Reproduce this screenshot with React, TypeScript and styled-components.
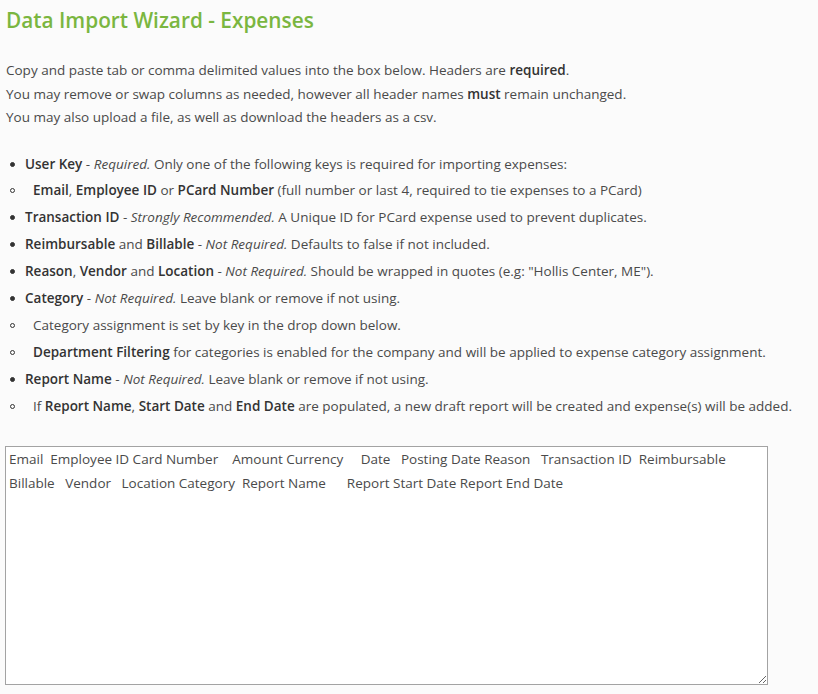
import styled, { createGlobalStyle } from "styled-components";

const GlobalStyle = createGlobalStyle`
  html, body {
    margin: 0;
    padding: 0;
    background: #fbfbfb;
  }
  body {
    font-family: "Open Sans", "Liberation Sans", sans-serif;
    color: #4a4a4a;
  }
`;

const Page = styled.div`
  padding: 8px 5px 0 5px;
`;

const Title = styled.h1`
  margin: 0 0 0 1px;
  font-size: 20.8px;
  line-height: 24px;
  font-weight: 600;
  color: #7ab640;
`;

const Intro = styled.p`
  margin: 27px 0 0 1px;
  font-size: 13.5px;
  line-height: 23.5px;
`;

const Strong = styled.b`
  font-weight: 600;
  color: #333;
`;

const List = styled.ul`
  list-style: none;
  margin: 21px 0 0 0;
  padding: 0;
  white-space: nowrap;
`;

const Item = styled.li<{ $sub?: boolean }>`
  position: relative;
  font-size: 13.5px;
  line-height: 26.9px;
  padding-left: ${(p) => (p.$sub ? "28px" : "20px")};

  &::before {
    content: "";
    position: absolute;
    box-sizing: border-box;
    left: 5px;
    top: 11px;
    width: 5px;
    height: 5px;
    border-radius: 50%;
    background: ${(p) => (p.$sub ? "transparent" : "#333")};
    border: 1px solid #333;
  }

  i {
    font-style: italic;
  }
`;

const Box = styled.textarea`
  display: block;
  box-sizing: border-box;
  margin-top: 26px;
  width: 763px;
  height: 239px;
  padding: 0 3px;
  border: 1px solid #a3a3a3;
  background: #fff;
  font-family: "Open Sans", "Liberation Sans", sans-serif;
  font-size: 13.5px;
  line-height: 24px;
  color: #4a4a4a;
  resize: both;
  outline: none;
  white-space: pre-wrap;
`;

const headers =
  "Email  Employee ID Card Number    Amount Currency     Date   Posting Date Reason   Transaction ID  Reimbursable\n" +
  "Billable   Vendor   Location Category  Report Name      Report Start Date Report End Date";

export default function App() {
  return (
    <Page>
      <GlobalStyle />
      <Title>Data Import Wizard - Expenses</Title>
      <Intro>
        Copy and paste tab or comma delimited values into the box below. Headers are <Strong>required</Strong>.
        <br />
        You may remove or swap columns as needed, however all header names <Strong>must</Strong> remain unchanged.
        <br />
        You may also upload a file, as well as download the headers as a csv.
      </Intro>
      <List>
        <Item>
          <Strong>User Key</Strong> - <i>Required.</i> Only one of the following keys is required for importing expenses:
        </Item>
        <Item $sub>
          <Strong>Email</Strong>, <Strong>Employee ID</Strong> or <Strong>PCard Number</Strong> (full number or last 4, required to tie expenses to a PCard)
        </Item>
        <Item>
          <Strong>Transaction ID</Strong> - <i>Strongly Recommended.</i> A Unique ID for PCard expense used to prevent duplicates.
        </Item>
        <Item>
          <Strong>Reimbursable</Strong> and <Strong>Billable</Strong> - <i>Not Required.</i> Defaults to false if not included.
        </Item>
        <Item>
          <Strong>Reason</Strong>, <Strong>Vendor</Strong> and <Strong>Location</Strong> - <i>Not Required.</i> Should be wrapped in quotes (e.g: "Hollis Center, ME").
        </Item>
        <Item>
          <Strong>Category</Strong> - <i>Not Required.</i> Leave blank or remove if not using.
        </Item>
        <Item $sub>Category assignment is set by key in the drop down below.</Item>
        <Item $sub>
          <Strong>Department Filtering</Strong> for categories is enabled for the company and will be applied to expense category assignment.
        </Item>
        <Item>
          <Strong>Report Name</Strong> - <i>Not Required.</i> Leave blank or remove if not using.
        </Item>
        <Item $sub>
          If <Strong>Report Name</Strong>, <Strong>Start Date</Strong> and <Strong>End Date</Strong> are populated, a new draft report will be created and expense(s) will be added.
        </Item>
      </List>
      <Box defaultValue={headers} spellCheck={false} />
    </Page>
  );
}
